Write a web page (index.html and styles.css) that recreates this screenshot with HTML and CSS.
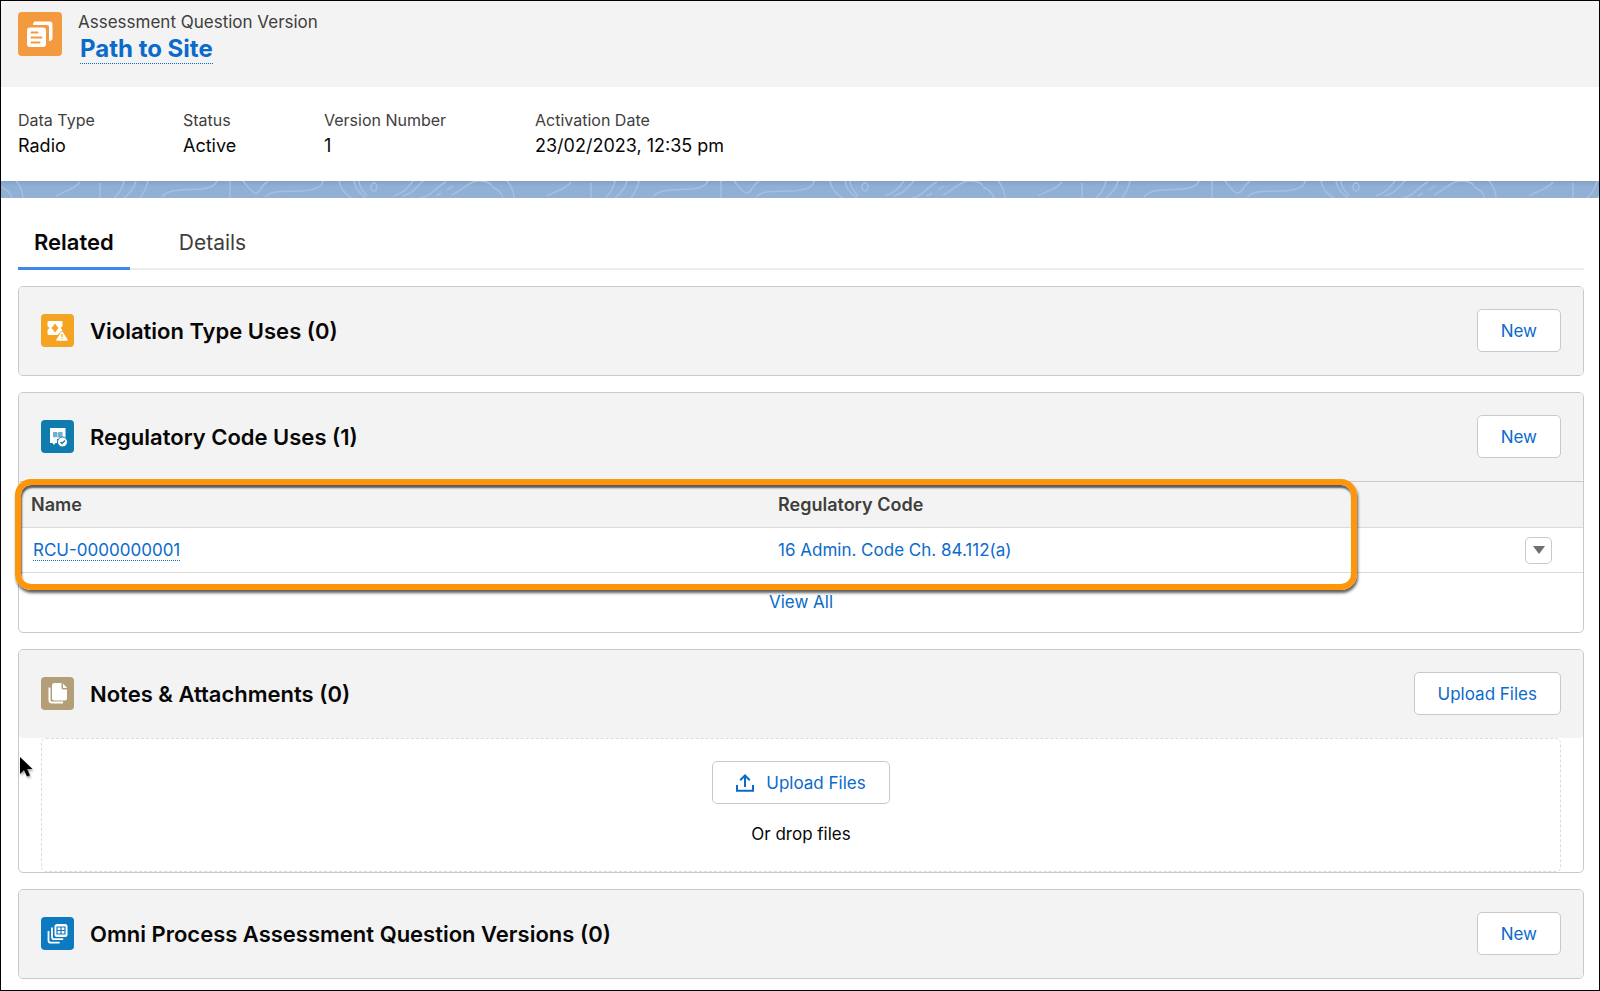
FILE: index.html
```html
<!DOCTYPE html>
<html lang="en">
<head>
<meta charset="utf-8">
<meta name="viewport" content="width=device-width, initial-scale=1">
<title>Path to Site | Assessment Question Version</title>
<link rel="stylesheet" href="styles.css">
</head>
<body>
<div class="page">
  <header class="record-header">
    <svg class="icon-lg" viewBox="0 0 44 44" aria-hidden="true">
      <rect width="44" height="44" rx="4" fill="#f49a3e"/>
      <path d="M17 9.500h14.500a3 3 0 0 1 3 3V26q0 3-3.500 3V14.500a1.500 1.500 0 0 0-1.500-1.500H15q0-3.500 2-3.500z" fill="#fff"/>
      <path fill-rule="evenodd" d="M12 15.500h13a3 3 0 0 1 3 3V32a3 3 0 0 1-3 3H12a3 3 0 0 1-3-3V18.500a3 3 0 0 1 3-3zm1.500 4a1 1 0 0 0 0 2h6a1 1 0 0 0 0-2zm0 5a1 1 0 0 0 0 2h10a1 1 0 0 0 0-2zm0 5a1 1 0 0 0 0 2h8a1 1 0 0 0 0-2z" fill="#fff"/>
    </svg>
    <div class="heading">
      <p class="entity">Assessment Question Version</p>
      <h1 class="record-name"><a href="#">Path to Site</a></h1>
    </div>
  </header>

  <dl class="highlights">
    <div class="field field-type"><dt>Data Type</dt><dd>Radio</dd></div>
    <div class="field field-status"><dt>Status</dt><dd>Active</dd></div>
    <div class="field field-version"><dt>Version Number</dt><dd>1</dd></div>
    <div class="field"><dt>Activation Date</dt><dd>23/02/2023, 12:35 pm</dd></div>
  </dl>

  <svg class="band" aria-hidden="true">
    <defs>
      <linearGradient id="shade" x1="0" y1="0" x2="0" y2="1">
        <stop offset="0" stop-color="#83a1c5"/><stop offset="0.3" stop-color="#90afd5"/><stop offset="1" stop-color="#92b1d5"/>
      </linearGradient>
      <pattern id="contours" width="491" height="17" patternUnits="userSpaceOnUse">
        <g fill="none" stroke="#a5c0df" stroke-width="1.500">
          <path d="M0 6q9 4 11 11M15 0q6 6 7 17M55 15c8-5 18-6 24-14M99 2v15M113 17Q121 10 123 0M123 17Q133 9 135 0M139 17Q145 9 147 0M161 16c10-14 49-1 55-16M229 17V0M242 0c4 4 8 12 13 12s6-10 12-11M264 16c8-8 20-5 36-6q21-1 22-10M338 0q2 11 13 17M353 0c1 6 4 12 12 17M358 0c0 6 4 10 8 15M393 15c10-3 14-9 19-15M402 15c10-3 14-9 20-15M419 17c12-1 15-11 26-16M435 15l5-3M446 9l6-4M451 14c14-7 20-19 37-12q6 3 7 15"/>
          <ellipse cx="373" cy="6" rx="3" ry="4"/>
        </g>
      </pattern>
    </defs>
    <rect width="100%" height="100%" fill="url(#shade)"/>
    <rect width="100%" height="100%" fill="url(#contours)"/>
  </svg>

  <main class="content">
    <nav class="tabs" aria-label="Record sections">
      <a class="tab tab-active" href="#" aria-current="page">Related</a>
      <a class="tab" href="#">Details</a>
    </nav>

    <section class="card">
      <div class="card-header">
        <svg class="icon" viewBox="0 0 33 33" aria-hidden="true">
          <rect width="33" height="33" rx="4" fill="#f4a421"/>
          <path fill-rule="evenodd" d="M7.500 7h13a1 1 0 0 1 1 1v4L19.500 14l2 2L16.500 21H8a1.500 1.500 0 0 1-1.500-1.500V16l2-2-2-2V8a1 1 0 0 1 1-1zM14 9.500L12.500 11.500l-2 2.500 2 2.500L14 18.500l1.500-2 2-2.500-2-2.500z" fill="#fff"/>
          <path d="M21 18.200L26 26H16z" fill="#fff" stroke="#fff" stroke-width="1.500" stroke-linejoin="round"/>
          <path d="M21 20v3M21 24.200v1" stroke="#f4a421" stroke-width="1.300"/>
        </svg>
        <h2 class="card-title">Violation Type Uses (0)</h2>
        <button class="btn" type="button">New</button>
      </div>
    </section>

    <section class="card">
      <div class="card-header">
        <svg class="icon" viewBox="0 0 33 33" aria-hidden="true">
          <rect width="33" height="33" rx="4" fill="#107cad"/>
          <path d="M9 8h15.500v11H16v4l-1.500 0-1.500 2-1.500-2H9z" fill="#fff"/>
          <path d="M12 12h3.500q1 0 1 1v5q0-.8-1-.8H12zM21.500 12H18q-1 0-1 1v5q0-.8 1-.8h3.500z" fill="#6eb0d0"/>
          <circle cx="21.500" cy="22" r="5" fill="#fff" stroke="#107cad"/>
          <path d="M19.500 22l1.500 1.500 3-3" fill="none" stroke="#107cad" stroke-width="1.400"/>
        </svg>
        <h2 class="card-title">Regulatory Code Uses (1)</h2>
        <button class="btn" type="button">New</button>
      </div>
      <table class="list">
        <thead>
          <tr><th class="col-name" scope="col">Name</th><th scope="col">Regulatory Code</th><th class="col-action" aria-label="Actions"></th></tr>
        </thead>
        <tbody>
          <tr>
            <td><a class="dotted" href="#">RCU-0000000001</a></td>
            <td><a href="#">16 Admin. Code Ch. 84.112(a)</a></td>
            <td class="col-action">
              <button class="menu-btn" type="button" aria-label="Show actions">
                <svg viewBox="0 0 12 8" width="12" height="8" aria-hidden="true"><path d="M0 0h12L6 8z" fill="#706e6b"/></svg>
              </button>
            </td>
          </tr>
        </tbody>
      </table>
      <div class="card-footer"><a href="#">View All</a></div>
      <div class="callout"></div>
    </section>

    <section class="card card-notes">
      <div class="card-header">
        <svg class="icon" viewBox="0 0 33 33" aria-hidden="true">
          <rect width="33" height="33" rx="4" fill="#b29e78"/>
          <path d="M13.500 6h7v5q0 1.500 1.500 1.500h4V21a2.500 2.500 0 0 1-2.500 2.500h-10A2.500 2.500 0 0 1 11 21V8.500A2.500 2.500 0 0 1 13.500 6zM22 6.500l4.200 4.500H22.500q-.5 0-.5-.5z" fill="#fff"/>
          <path d="M8.500 10.500V23q0 2.500 2.500 2.500h11" fill="none" stroke="#fff" stroke-width="2"/>
        </svg>
        <h2 class="card-title">Notes &amp; Attachments (0)</h2>
        <button class="btn" type="button">Upload Files</button>
      </div>
      <div class="dropzone">
        <button class="btn btn-upload" type="button">
          <svg viewBox="0 0 18 18" width="18" height="18" aria-hidden="true"><path d="M1 11v5.800h16V11M9 13V2M4.200 6.300L9 1.500l4.800 4.800" fill="none" stroke="#0b6bcb" stroke-width="2"/></svg>
          Upload Files
        </button>
        <p class="drop-hint">Or drop files</p>
      </div>
      <svg class="pointer" viewBox="0 0 16 24" aria-hidden="true"><path d="M1 1v17l4-4 3 6.500 3-1.300-3-6.200h5.500z"/></svg>
    </section>

    <section class="card">
      <div class="card-header">
        <svg class="icon" viewBox="0 0 33 33" aria-hidden="true">
          <rect width="33" height="33" rx="4" fill="#0c79c1"/>
          <rect x="13.500" y="7" width="13" height="13" rx="2.500" fill="#fff"/>
          <path d="M20 9.500v8M16 13.500h8M16 10h8v7h-8z" fill="none" stroke="#0c79c1" stroke-width="1.200"/>
          <path d="M11 10.500V20q0 2.200 2.200 2.200h9M7.500 14v9.500q0 2.200 2.200 2.200h9" fill="none" stroke="#fff" stroke-width="1.800"/>
        </svg>
        <h2 class="card-title">Omni Process Assessment Question Versions (0)</h2>
        <button class="btn" type="button">New</button>
      </div>
    </section>
  </main>
</div>
</body>
</html>
```
FILE: styles.css
```css
* { box-sizing: border-box; }

body {
  margin: 0;
  font-family: Inter, "Liberation Sans", sans-serif;
  font-size: 17px;
  line-height: 24px;
  color: #080707;
  background: #fff;
}

h1, h2, p, dl, dd { margin: 0; }

a { color: #0b6bcb; text-decoration: none; }

.page { min-height: 100vh; border: 1px solid #000; }

.record-header {
  display: flex;
  gap: 16px;
  padding: 11px 17px 22px;
  background: #f3f3f3;
}
.icon-lg { flex: none; width: 44px; height: 44px; }
.entity { line-height: 20px; color: #3e3e3c; }
.record-name { padding-left: 2px; font-size: 24px; line-height: 32px; }
.record-name a { display: inline-block; border-bottom: 1px dotted #0b6bcb; padding-top: 3px; line-height: 28px; }

.highlights { display: flex; padding: 20px 17px 23px; }
.field { padding-right: 24px; }
.field dt { font-size: 16px; line-height: 26px; color: #3e3e3c; }
.field dd { font-size: 18px; line-height: 25px; }
.field-type { width: 165px; }
.field-status { width: 141px; }
.field-version { width: 211px; }

.band { display: block; width: 100%; height: 17px; }

.content {
  display: flex;
  flex-direction: column;
  gap: 16px;
  padding: 20px 15px 8px 17px;
}

.tabs { display: flex; gap: 33px; border-bottom: 2px solid #ececec; }
.tab {
  margin-bottom: -2px;
  padding: 11px 16px;
  border-bottom: 3px solid transparent;
  font-size: 21px;
  line-height: 27px;
  color: #3e3e3c;
}
.tab-active { border-bottom-color: #3f86ee; font-size: 22px; font-weight: 600; color: #080707; }

.card {
  position: relative;
  border: 1px solid #c9c9c9;
  border-radius: 5px;
  background: #fff;
}
.card-header {
  display: flex;
  align-items: center;
  gap: 16px;
  padding: 22px 22px 23px;
  border-radius: 4px;
  background: #f3f3f3;
}
.icon { flex: none; width: 33px; height: 33px; }
.card-title { flex: 1; font-size: 22px; line-height: 28px; font-weight: 600; }

.btn {
  height: 43px;
  padding: 0 23px;
  border: 1px solid #c9c9c9;
  border-radius: 5px;
  background: #fff;
  font: inherit;
  color: #0b6bcb;
}

.list { width: 100%; border-collapse: collapse; table-layout: fixed; text-align: left; }
.list th {
  height: 46px;
  padding: 0 12px;
  border-top: 1px solid #c9c9c9;
  border-bottom: 1px solid #dddbda;
  background: #f3f3f3;
  font-size: 18px;
  font-weight: 600;
  color: #3e3e3c;
}
.list td { height: 45px; padding: 0 12px; border-bottom: 1px solid #dddbda; }
.list .col-name { width: 747px; }
.list .col-action { width: 70px; padding: 0 31px 0 0; text-align: right; }
.dotted { margin-left: 2px; border-bottom: 1px dotted #0b6bcb; }
.menu-btn {
  display: inline-flex;
  align-items: center;
  justify-content: center;
  width: 27px;
  height: 27px;
  padding: 0;
  border: 1px solid #c9c9c9;
  border-radius: 5px;
  background: #fff;
  vertical-align: middle;
}
.card-footer { padding: 17px 0 18px; text-align: center; }

.callout {
  position: absolute;
  top: 86px;
  right: 226px;
  bottom: 42px;
  left: -4px;
  border: 6px solid #ff9508;
  border-radius: 16px;
  box-shadow: 1px 3px 3px #000000a0, inset 1px 3px 2px #000000a0;
  pointer-events: none;
}

.dropzone {
  display: flex;
  flex-direction: column;
  align-items: center;
  gap: 18px;
  margin: 0 22px;
  padding: 22px 0 25px;
  border: 1px dashed #dddbda;
  border-radius: 5px;
}
.btn-upload { display: flex; align-items: center; gap: 12px; }

.pointer {
  position: absolute;
  top: 106px;
  left: 0;
  width: 16px;
  height: 24px;
  filter: drop-shadow(1px 2px 1px #00000060);
}
```
